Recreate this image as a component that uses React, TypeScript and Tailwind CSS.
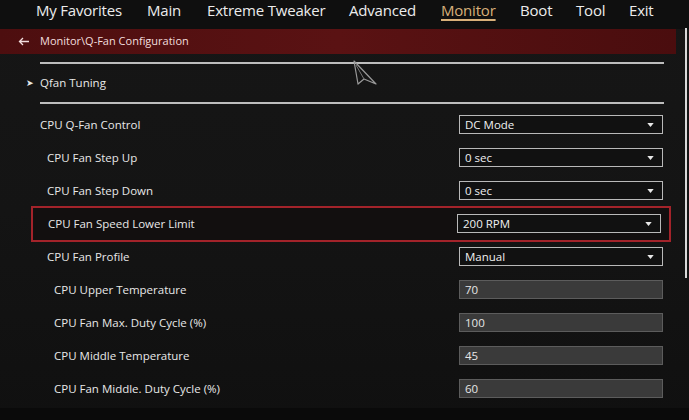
import React from 'react';

// menu tabs with their left offsets taken from the screen
const NAV: [string, string][] = [
  ['My Favorites', 'w-[111px]'],
  ['Main', 'w-[60px]'],
  ['Extreme Tweaker', 'w-[142px]'],
  ['Advanced', 'w-[92px]'],
  ['Monitor', 'w-[79px]'],
  ['Boot', 'w-[56px]'],
  ['Tool', 'w-[53px]'],
  ['Exit', 'w-[50px]'],
];

type Row = {
  label: string;
  indent: 0 | 1 | 2;
  kind: 'select' | 'input';
  value: string;
  active?: boolean;
};

const ROWS: Row[] = [
  { label: 'CPU Q-Fan Control', indent: 0, kind: 'select', value: 'DC Mode' },
  { label: 'CPU Fan Step Up', indent: 1, kind: 'select', value: '0 sec' },
  { label: 'CPU Fan Step Down', indent: 1, kind: 'select', value: '0 sec' },
  { label: 'CPU Fan Speed Lower Limit', indent: 1, kind: 'select', value: '200 RPM', active: true },
  { label: 'CPU Fan Profile', indent: 1, kind: 'select', value: 'Manual' },
  { label: 'CPU Upper Temperature', indent: 2, kind: 'input', value: '70' },
  { label: 'CPU Fan Max. Duty Cycle (%)', indent: 2, kind: 'input', value: '100' },
  { label: 'CPU Middle Temperature', indent: 2, kind: 'input', value: '45' },
  { label: 'CPU Fan Middle. Duty Cycle (%)', indent: 2, kind: 'input', value: '60' },
];

const INDENT = ['pl-[8px]', 'pl-[15px]', 'pl-[22px]'];

function Control({ row }: { row: Row }) {
  if (row.kind === 'input') {
    return (
      <div className="w-[204px] h-[19px] flex items-center px-[5px] bg-[#3a3a3a] border border-[#5c5c5c] text-[11.5px] text-[#e6e6e6]">
        {row.value}
      </div>
    );
  }
  return (
    <div className="w-[204px] h-[19px] flex items-center justify-between px-[5px] bg-[#111] border-[1.5px] border-[#b9b9b9] text-[11.5px] text-[#f0f0f0]">
      <span>{row.value}</span>
      <svg width="7" height="4" viewBox="0 0 8 5" className="mr-[3px]">
        <path d="M0 0h8L4 5z" fill="#e8e8e8" />
      </svg>
    </div>
  );
}

export default function App() {
  return (
    <div
      className="relative w-[689px] h-[420px] overflow-hidden bg-gradient-to-b from-[#161616] via-[#141414] to-[#101010] text-[#e8e8e8]"
      style={{ fontFamily: '"Open Sans", "Noto Sans", sans-serif' }}
    >
      {/* top menu */}
      <div className="h-[29px] flex items-start pl-[36px] bg-[#0f0f0f] text-[15px] leading-[20px] tracking-[-0.2px] whitespace-nowrap">
        {NAV.map(([n, w]) =>
          n === 'Monitor' ? (
            <span key={n} className={`${w} shrink-0`}>
              <span className="text-[#d8b07a] underline decoration-[1.5px] underline-offset-[3px]">{n}</span>
            </span>
          ) : (
            <span key={n} className={`${w} shrink-0 text-[#ececec]`}>
              {n}
            </span>
          ),
        )}
      </div>

      {/* breadcrumb */}
      <div className="w-[676px] h-[25px] flex items-center pl-[18px] gap-[10px] bg-gradient-to-r from-[#4d0e0f] via-[#5a1213] to-[#4a0d0e] text-[11px] text-[#f2dede]">
        <svg width="12" height="9" viewBox="0 0 12 9">
          <path d="M11 4.5H1.5M5 1L1.5 4.5 5 8" stroke="#f2dede" strokeWidth="1.3" fill="none" />
        </svg>
        <span>Monitor\Q-Fan Configuration</span>
      </div>

      {/* scrollbar */}
      <div className="absolute left-[685px] top-[28px] w-[2px] h-[250px] bg-[#d8d8d8]" />

      <div className="pl-[32px] pr-[18px]">
        <div className="ml-[8px] mt-[8px] w-[624px] h-[2px] bg-[#bdbdbd]" />
        <div className="h-[38px] flex items-center text-[11.5px]">
          <span className="w-[8px] -ml-[6px] mr-[6px] text-[9px] text-[#e8e8e8]">➤</span>
          <span>Qfan Tuning</span>
        </div>
        <div className="ml-[8px] w-[624px] h-[2px] bg-[#bdbdbd]" />
        <div className="h-[4px]" />
        {ROWS.map((r) => (
          <div
            key={r.label}
            className={`flex items-center pr-[8px] text-[11.5px] ${INDENT[r.indent]} ${
              r.active
                ? 'h-[36px] -my-[1.5px] border-2 border-[#a3232a] bg-[#120f0f] relative z-10 -ml-px'
                : 'h-[33px]'
            }`}
          >
            <span className="flex-1">{r.label}</span>
            <Control row={r} />
          </div>
        ))}
      </div>

      {/* bottom strip */}
      <div className="absolute left-0 bottom-0 w-full h-[12px] bg-[#0a0a0a]" />

      {/* mouse pointer */}
      <svg className="absolute left-[352px] top-[60px]" width="26" height="26" viewBox="0 0 26 26">
        <path d="M2 1L24 24 12 19 6 24z" fill="none" stroke="#9a9a9a" strokeWidth="1.2" strokeLinejoin="round" />
        <path d="M4 5L12 19" stroke="#777" strokeWidth="1" />
      </svg>
    </div>
  );
}
